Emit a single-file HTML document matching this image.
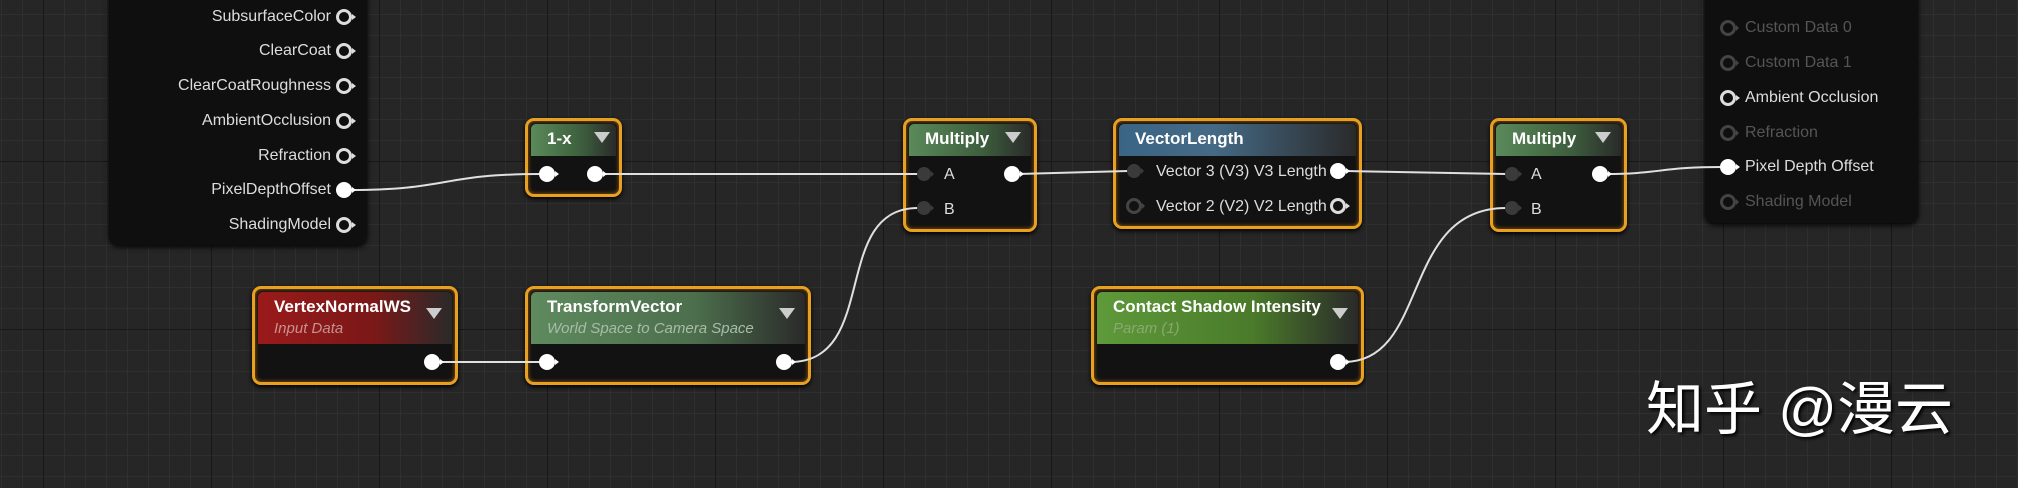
<!DOCTYPE html>
<html><head><meta charset="utf-8"><style>
*{margin:0;padding:0;box-sizing:border-box}
body{width:2018px;height:488px;overflow:hidden;position:relative;font-family:"Liberation Sans",sans-serif;
background-color:#262626;
background-image:
linear-gradient(90deg,#181818 1px,transparent 1px),
linear-gradient(0deg,#181818 1px,transparent 1px),
linear-gradient(90deg,#2f2f2f 1px,transparent 1px),
linear-gradient(0deg,#2f2f2f 1px,transparent 1px);
background-size:168px 168px,168px 168px,21px 21px,21px 21px;
background-position:43px 0,0 162px,1px 0,0 15px;}
.panel{position:absolute;background:#0f0f0f;border-radius:0 0 10px 10px;box-shadow:0 2px 6px #000}
.lbl{position:absolute;color:#ddd;font-size:16px;white-space:nowrap;line-height:20px}
.node{position:absolute;border:3px solid #e8a020;border-radius:9px;background:#121212;box-shadow:0 0 4px #a06010 inset,0 2px 5px #000}
.hdr{position:absolute;left:3px;right:3px;top:3px;border-radius:5px 5px 0 0;color:#fff;font-weight:bold;font-size:17px;padding-left:16px;}
.sub{font-style:italic;font-weight:normal;font-size:15px;position:absolute;left:16px}
.tri{position:absolute;right:10px;width:0;height:0;border-left:8px solid transparent;border-right:8px solid transparent;border-top:11px solid #ccc}
.wm{position:absolute;left:1646px;top:362px;font-family:"Liberation Sans","Noto Sans CJK SC",sans-serif;font-size:58px;color:#fff;text-shadow:2px 2px 3px #000;white-space:nowrap}
</style></head><body>

<div class="panel" style="left:109px;top:-10px;width:258px;height:255px"></div>
<div class="lbl" style="right:1687px;top:7px">SubsurfaceColor</div>
<div class="lbl" style="right:1687px;top:41px">ClearCoat</div>
<div class="lbl" style="right:1687px;top:76px">ClearCoatRoughness</div>
<div class="lbl" style="right:1687px;top:111px">AmbientOcclusion</div>
<div class="lbl" style="right:1687px;top:146px">Refraction</div>
<div class="lbl" style="right:1687px;top:180px">PixelDepthOffset</div>
<div class="lbl" style="right:1687px;top:215px">ShadingModel</div>

<div class="panel" style="left:1705px;top:-10px;width:213px;height:233px"></div>
<div class="lbl" style="left:1745px;top:18px;color:#555">Custom Data 0</div>
<div class="lbl" style="left:1745px;top:53px;color:#555">Custom Data 1</div>
<div class="lbl" style="left:1745px;top:88px">Ambient Occlusion</div>
<div class="lbl" style="left:1745px;top:123px;color:#555">Refraction</div>
<div class="lbl" style="left:1745px;top:157px">Pixel Depth Offset</div>
<div class="lbl" style="left:1745px;top:192px;color:#555">Shading Model</div>

<div class="node" style="left:525px;top:118px;width:97px;height:79px">
<div class="hdr" style="height:32px;line-height:30px;background:linear-gradient(90deg,#5a8a5a,#3d5e3d 60%,#2a2a2a)">1-x<div class="tri" style="top:8px;right:6px"></div></div></div>
<div class="node" style="left:903px;top:118px;width:134px;height:114px">
<div class="hdr" style="height:32px;line-height:30px;background:linear-gradient(90deg,#5a8a5a,#3d5e3d 60%,#2a2a2a)">Multiply<div class="tri" style="top:8px"></div></div>
<div class="lbl" style="left:38px;top:44px">A</div><div class="lbl" style="left:38px;top:79px">B</div></div>
<div class="node" style="left:1113px;top:118px;width:249px;height:111px">
<div class="hdr" style="height:32px;line-height:30px;background:linear-gradient(90deg,#3a6585,#456a85 40%,#2a2a2a)">VectorLength</div>
<div class="lbl" style="left:40px;top:41px">Vector 3 (V3) V3 Length</div>
<div class="lbl" style="left:40px;top:76px">Vector 2 (V2) V2 Length</div></div>
<div class="node" style="left:1490px;top:118px;width:137px;height:114px">
<div class="hdr" style="height:32px;line-height:30px;background:linear-gradient(90deg,#5a8a5a,#3d5e3d 60%,#2a2a2a)">Multiply<div class="tri" style="top:8px"></div></div>
<div class="lbl" style="left:38px;top:44px">A</div><div class="lbl" style="left:38px;top:79px">B</div></div>
<div class="node" style="left:252px;top:286px;width:206px;height:99px">
<div class="hdr" style="height:52px;padding-top:4px;line-height:22px;background:linear-gradient(90deg,#9a1a1a,#7a1818 60%,#2a2a2a)">VertexNormalWS<div class="sub" style="top:26px;color:#c89090">Input Data</div><div class="tri" style="top:16px"></div></div></div>
<div class="node" style="left:525px;top:286px;width:286px;height:99px">
<div class="hdr" style="height:52px;padding-top:4px;line-height:22px;background:linear-gradient(90deg,#5e8a5e,#4c6e4c 60%,#2a2a2a)">TransformVector<div class="sub" style="top:26px;color:#a8bca8">World Space to Camera Space</div><div class="tri" style="top:16px"></div></div></div>
<div class="node" style="left:1091px;top:286px;width:273px;height:99px">
<div class="hdr" style="height:52px;padding-top:4px;line-height:22px;background:linear-gradient(90deg,#5e9a3a,#4a7a2a 60%,#2a2a2a)">Contact Shadow Intensity<div class="sub" style="top:26px;color:#8aa870">Param (1)</div><div class="tri" style="top:16px"></div></div></div>

<svg width="2018" height="488" style="position:absolute;left:0;top:0">
<g fill="none" stroke="#e0e0e0" stroke-width="2">
<path d="M350 190 C450 190 440 174 541 174"/>
<path d="M601 174 L918 174"/>
<path d="M790 362 C880 362 830 208 918 208"/>
<path d="M438 362 L541 362"/>
<path d="M1018 174 L1128 171"/>
<path d="M1344 171 L1506 174"/>
<path d="M1344 362 C1430 362 1400 208 1506 208"/>
<path d="M1606 174 C1660 174 1660 167 1722 167"/>
</g>
<defs>
<g id="ring"><circle r="6.5" fill="none" stroke="#ddd" stroke-width="3"/><path d="M8 -3 L12 0 L8 3Z" fill="#ddd"/></g>
<g id="full"><circle r="8" fill="#fff"/><path d="M8 -3 L12 0 L8 3Z" fill="#fff"/></g>
<g id="dim"><circle r="7" fill="#3a3a3a"/><path d="M7 -3 L10 0 L7 3Z" fill="#3a3a3a"/></g>
<g id="dring"><circle r="6.5" fill="none" stroke="#444" stroke-width="3"/><path d="M8 -3 L11 0 L8 3Z" fill="#444"/></g>
</defs>
<use href="#ring" x="344" y="17"/><use href="#ring" x="344" y="51"/><use href="#ring" x="344" y="86"/>
<use href="#ring" x="344" y="121"/><use href="#ring" x="344" y="156"/><use href="#full" x="344" y="190"/><use href="#ring" x="344" y="225"/>
<use href="#dring" x="1728" y="28"/><use href="#dring" x="1728" y="63"/><use href="#ring" x="1728" y="98"/>
<use href="#dring" x="1728" y="133"/><use href="#full" x="1728" y="167"/><use href="#dring" x="1728" y="202"/>
<use href="#full" x="547" y="174"/><use href="#full" x="595" y="174"/>
<use href="#dim" x="924" y="174"/><use href="#dim" x="924" y="208"/><use href="#full" x="1012" y="174"/>
<use href="#dim" x="1134" y="171"/><use href="#dring" x="1134" y="206"/><use href="#full" x="1338" y="171"/><use href="#ring" x="1338" y="206"/>
<use href="#dim" x="1512" y="174"/><use href="#dim" x="1512" y="208"/><use href="#full" x="1600" y="174"/>
<use href="#full" x="432" y="362"/><use href="#full" x="547" y="362"/><use href="#full" x="784" y="362"/><use href="#full" x="1338" y="362"/>
</svg>
<div class="wm">知乎 @漫云</div>
</body></html>
